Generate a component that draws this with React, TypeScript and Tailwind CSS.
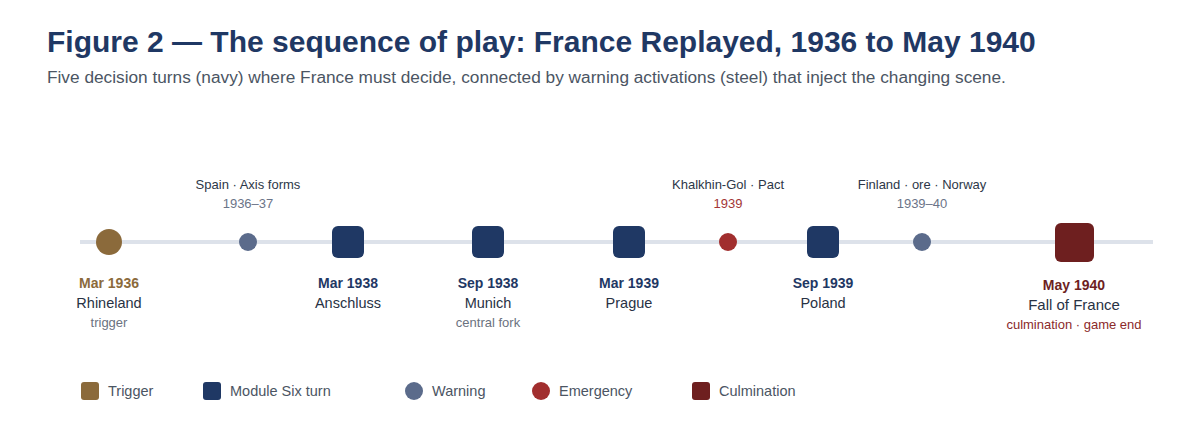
import React from 'react';

type Kind = 'trigger' | 'turn' | 'warning' | 'emergency' | 'culmination';

type TimelineEvent = {
  pos: string;
  kind: Kind;
  date?: string;
  name?: string;
  note?: string;
  above?: string;
  when?: string;
};

const EVENTS: TimelineEvent[] = [
  { pos: 'left-[109px]', kind: 'trigger', date: 'Mar 1936', name: 'Rhineland', note: 'trigger' },
  { pos: 'left-[248px]', kind: 'warning', above: 'Spain · Axis forms', when: '1936–37' },
  { pos: 'left-[348px]', kind: 'turn', date: 'Mar 1938', name: 'Anschluss' },
  { pos: 'left-[488px]', kind: 'turn', date: 'Sep 1938', name: 'Munich', note: 'central fork' },
  { pos: 'left-[629px]', kind: 'turn', date: 'Mar 1939', name: 'Prague' },
  { pos: 'left-[728px]', kind: 'emergency', above: 'Khalkhin-Gol · Pact', when: '1939' },
  { pos: 'left-[823px]', kind: 'turn', date: 'Sep 1939', name: 'Poland' },
  { pos: 'left-[922px]', kind: 'warning', above: 'Finland · ore · Norway', when: '1939–40' },
  {
    pos: 'left-[1074px]',
    kind: 'culmination',
    date: 'May 1940',
    name: 'Fall of France',
    note: 'culmination · game end',
  },
];

const NODE: Record<Kind, string> = {
  trigger: 'h-[26px] w-[26px] rounded-full bg-[#8b6a3b]',
  turn: 'h-[32px] w-[32px] rounded-[6px] bg-[#1f3864]',
  warning: 'h-[18px] w-[18px] rounded-full bg-[#5b6b8b]',
  emergency: 'h-[18px] w-[18px] rounded-full bg-[#a12e2e]',
  culmination: 'h-[39px] w-[39px] rounded-[6px] bg-[#6e1f1f]',
};

const DATE_COLOR: Record<Kind, string> = {
  trigger: 'text-[#8b6a3b]',
  turn: 'text-[#1f3864]',
  warning: 'text-[#1f3864]',
  emergency: 'text-[#1f3864]',
  culmination: 'text-[#6e1f1f]',
};

const LEGEND: { label: string; swatch: string; width: string }[] = [
  { label: 'Trigger', swatch: 'rounded-[3px] bg-[#8b6a3b]', width: 'w-[122px]' },
  { label: 'Module Six turn', swatch: 'rounded-[3px] bg-[#1f3864]', width: 'w-[202px]' },
  { label: 'Warning', swatch: 'rounded-full bg-[#5b6b8b]', width: 'w-[127px]' },
  { label: 'Emergency', swatch: 'rounded-full bg-[#a12e2e]', width: 'w-[160px]' },
  { label: 'Culmination', swatch: 'rounded-[3px] bg-[#6e1f1f]', width: 'w-[140px]' },
];

const EventColumn = ({ ev }: { ev: TimelineEvent }) => {
  const isEnd = ev.kind === 'culmination';
  return (
    <div className={`absolute top-0 flex w-[200px] -translate-x-1/2 flex-col items-center text-center ${ev.pos}`}>
      {/* labels over the line (warning / emergency activations) */}
      <div className="flex h-[42px] flex-col justify-end text-[13px] leading-[19px]">
        {ev.above && <span className="text-[#2d3748]">{ev.above}</span>}
        {ev.when && (
          <span className={ev.kind === 'emergency' ? 'text-[#a33636]' : 'text-[#6b7488]'}>{ev.when}</span>
        )}
      </div>

      <div className="mt-[9px] flex h-[40px] items-center justify-center">
        <div className={NODE[ev.kind]} />
      </div>

      {ev.date && (
        <div className={`flex flex-col items-center ${isEnd ? 'pt-[13px]' : 'pt-[11px]'}`}>
          <span className={`text-[14px] font-bold leading-[20px] ${DATE_COLOR[ev.kind]}`}>{ev.date}</span>
          <span className={`leading-[20px] text-[#283244] ${isEnd ? 'text-[15px]' : 'text-[14.5px]'}`}>
            {ev.name}
          </span>
          {ev.note && (
            <span className={`text-[13px] leading-[19px] ${isEnd ? 'text-[#8b2a2a]' : 'text-[#6b7280]'}`}>
              {ev.note}
            </span>
          )}
        </div>
      )}
    </div>
  );
};

const App = () => {
  return (
    <div className="h-[438px] w-[1199px] overflow-hidden bg-white font-['Liberation_Sans',Arial,sans-serif]">
      <div className="pl-[47px] pt-[24px]">
        <h1 className="text-[30px] font-bold leading-[36px] text-[#1f3864]">
          Figure 2 — The sequence of play: France Replayed, 1936 to May 1940
        </h1>
        <p className="mt-[5px] text-[17.25px] leading-[24px] text-[#4b5563]">
          Five decision turns (navy) where France must decide, connected by warning activations (steel) that inject
          the changing scene.
        </p>
      </div>

      <div className="relative mt-[82px] h-[170px]">
        {/* the track */}
        <div className="absolute left-[80px] top-[69px] h-[4px] w-[1073px] bg-[#dde2ea]" />
        {EVENTS.map((ev) => (
          <EventColumn key={ev.pos} ev={ev} />
        ))}
      </div>

      <div className="mt-[40px] flex items-center pl-[81px]">
        {LEGEND.map((item) => (
          <div key={item.label} className={`flex items-center gap-[9px] ${item.width}`}>
            <div className={`h-[18px] w-[18px] ${item.swatch}`} />
            <span className="text-[14.5px] leading-[20px] text-[#4b5563]">{item.label}</span>
          </div>
        ))}
      </div>
    </div>
  );
};

export default App;
